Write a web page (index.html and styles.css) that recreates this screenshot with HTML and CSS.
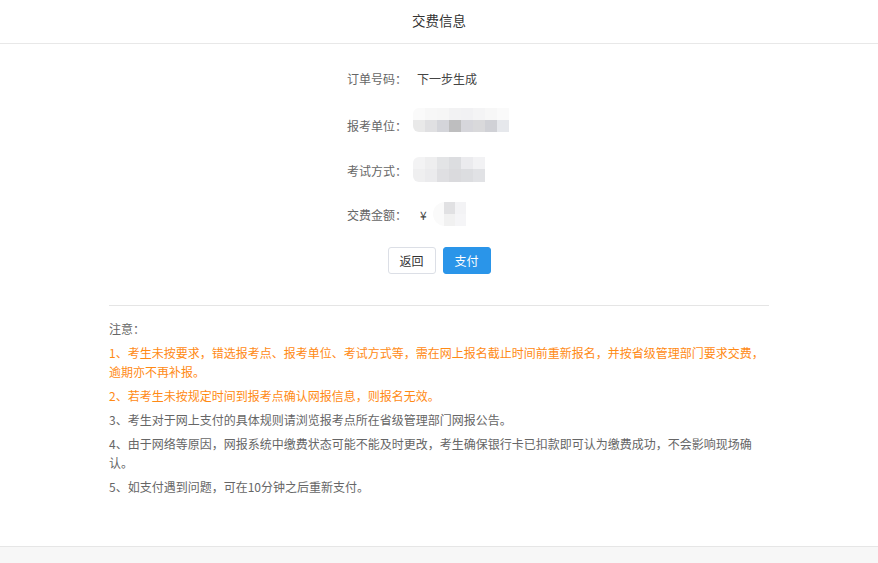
FILE: index.html
```html
<!DOCTYPE html>
<html lang="zh-CN">
<head>
    <meta charset="UTF-8">
    <meta name="viewport" content="width=device-width, initial-scale=1.0">
    <title>交费信息</title>
    <link rel="stylesheet" href="styles.css">
</head>
<body>
    <div class="page">
        <div class="header">交费信息</div>

        <div class="main">
            <!-- order info -->
            <div class="form">
                <div class="row">
                    <span class="label">订单号码：</span>
                    <span class="value">下一步生成</span>
                </div>
                <div class="row">
                    <span class="label">报考单位：</span>
                    <div class="blur blur-unit">
                        <i></i><i></i><i></i><i></i><i></i><i></i><i></i><i></i>
                        <i></i><i></i><i></i><i></i><i></i><i></i><i></i><i></i>
                    </div>
                </div>
                <div class="row">
                    <span class="label">考试方式：</span>
                    <div class="blur blur-mode">
                        <i></i><i></i><i></i><i></i><i></i><i></i>
                        <i></i><i></i><i></i><i></i><i></i><i></i>
                    </div>
                </div>
                <div class="row">
                    <span class="label">交费金额：</span>
                    <span class="value yen">¥</span>
                    <div class="blur blur-fee">
                        <i></i><i></i><i></i>
                        <i></i><i></i><i></i>
                    </div>
                </div>
            </div>

            <div class="actions">
                <button type="button" class="btn btn-back">返回</button>
                <button type="button" class="btn btn-pay">支付</button>
            </div>

            <div class="notes">
                <p>注意：</p>
                <p class="warn">1、考生未按要求，错选报考点、报考单位、考试方式等，需在网上报名截止时间前重新报名，并按省级管理部门要求交费，逾期亦不再补报。</p>
                <p class="warn">2、若考生未按规定时间到报考点确认网报信息，则报名无效。</p>
                <p>3、考生对于网上支付的具体规则请浏览报考点所在省级管理部门网报公告。</p>
                <p>4、由于网络等原因，网报系统中缴费状态可能不能及时更改，考生确保银行卡已扣款即可认为缴费成功，不会影响现场确认。</p>
                <p>5、如支付遇到问题，可在10分钟之后重新支付。</p>
            </div>
        </div>
    </div>
</body>
</html>
```

FILE: styles.css
```css
body {
    margin: 0;
    font-family: "Microsoft YaHei", "Noto Sans CJK SC", sans-serif;
    font-size: 12px;
    color: #666;
    background-color: #f7f7f7;
}
.page {
    background-color: #fff;
    border-bottom: 1px solid #e6e6e6;
}
.header {
    height: 43px;
    line-height: 41px;
    text-align: center;
    font-size: 13.5px;
    color: #333;
    border-bottom: 1px solid #e8e8e8;
}
.main {
    height: 502px;
    padding-top: 22px;
    box-sizing: border-box;
}
.form {
    width: 184px;
    margin: 0 auto;
}
.row {
    display: flex;
    align-items: center;
    height: 24px;
    margin-bottom: 20px;
}
.row:first-child {
    margin-bottom: 23px;
}
.row:nth-child(2) {
    margin-bottom: 21px;
}
.row:last-child {
    margin-bottom: 21px;
}
.label {
    width: 70px;
    flex-shrink: 0;
}
.value {
    color: #444;
}
.yen {
    width: 13px;
    padding-left: 3px;
}
.blur {
    display: grid;
    grid-auto-rows: 12px;
    margin-left: -4px;
    border-radius: 6px 0 0 6px;
    overflow: hidden;
}
.blur i {
    display: block;
}
.blur-unit {
    grid-template-columns: repeat(8, 12px);
    margin-bottom: 10px;
}
.blur-unit i:nth-child(1) { background: #fafafa; }
.blur-unit i:nth-child(2) { background: #f7f7f7; }
.blur-unit i:nth-child(3) { background: #f6f6f6; }
.blur-unit i:nth-child(4) { background: #f2f2f3; }
.blur-unit i:nth-child(5) { background: #f1f1f3; }
.blur-unit i:nth-child(6) { background: #f4f4f5; }
.blur-unit i:nth-child(7) { background: #f7f7f7; }
.blur-unit i:nth-child(8) { background: #fafafa; }
.blur-unit i:nth-child(9) { background: #e9e9e9; }
.blur-unit i:nth-child(10) { background: #e0e0e2; }
.blur-unit i:nth-child(11) { background: #d4d5da; }
.blur-unit i:nth-child(12) { background: #bebebf; }
.blur-unit i:nth-child(13) { background: #d6d6db; }
.blur-unit i:nth-child(14) { background: #d9d9db; }
.blur-unit i:nth-child(15) { background: #d0d1d6; }
.blur-unit i:nth-child(16) { background: #e6e8ec; }

.blur-mode {
    grid-template-columns: repeat(6, 12px);
    grid-auto-rows: 12.5px;
    margin-bottom: 2px;
}
.blur-mode i:nth-child(1) { background: #f3f3f4; }
.blur-mode i:nth-child(2) { background: #eeeeef; }
.blur-mode i:nth-child(3) { background: #e3e4e6; }
.blur-mode i:nth-child(4) { background: #dcdde0; }
.blur-mode i:nth-child(5) { background: #ebebee; }
.blur-mode i:nth-child(6) { background: #f2f2f4; }
.blur-mode i:nth-child(7) { background: #efeff0; }
.blur-mode i:nth-child(8) { background: #ebebed; }
.blur-mode i:nth-child(9) { background: #dfdfe2; }
.blur-mode i:nth-child(10) { background: #dadadd; }
.blur-mode i:nth-child(11) { background: #dcdde0; }
.blur-mode i:nth-child(12) { background: #e1e2e5; }

.blur-fee {
    grid-template-columns: repeat(3, 11px);
    margin-left: 0;
    border-radius: 12px 0 0 12px;
}
.blur-fee i:nth-child(1) { background: #fafafa; }
.blur-fee i:nth-child(2) { background: #e1e1e3; }
.blur-fee i:nth-child(3) { background: #f3f3f5; }
.blur-fee i:nth-child(4) { background: #fafafa; }
.blur-fee i:nth-child(5) { background: #f1f1f1; }
.blur-fee i:nth-child(6) { background: #f5f5f7; }

.actions {
    display: flex;
    justify-content: center;
    gap: 7px;
}
.btn {
    width: 48px;
    height: 27px;
    padding: 0;
    font-family: inherit;
    font-size: 12px;
    border-radius: 3px;
    cursor: pointer;
}
.btn-back {
    background-color: #fff;
    color: #333;
    border: 1px solid #dcdfe6;
}
.btn-pay {
    background-color: #2a95e9;
    color: #fff;
    border: 1px solid #2a95e9;
}
.notes {
    width: 660px;
    margin: 31px auto 0;
    padding-top: 13px;
    border-top: 1px solid #e5e5e5;
}
.notes p {
    margin: 0 0 5px;
    line-height: 19px;
}
.notes .warn {
    color: #ff8a14;
}
```
